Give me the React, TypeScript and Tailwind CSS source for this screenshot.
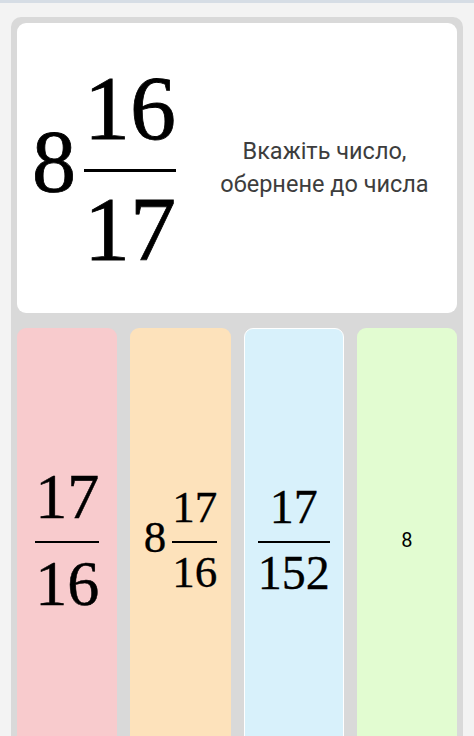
import React from "react";

const serif = { fontFamily: '"Liberation Serif", "Times New Roman", serif' };

export default function App() {
  return (
    <div className="h-[736px] w-[474px] overflow-hidden bg-[#f3f3f3]">
      <div className="h-[3px] bg-[#d6dde5]" />
      <div className="px-[11px] pt-[14px]">
        <div className="rounded-[10px] bg-[#d9d9d9] p-[6px]">
          {/* Question card */}
          <div className="flex h-[290px] items-center rounded-[9px] bg-white pl-[15px]">
            <div className="flex items-center [-webkit-text-stroke:0.8px_black]" style={serif}>
              <div className="mb-[12px] text-[88px] leading-none text-black">8</div>
              <div className="ml-[8px] flex flex-col items-stretch text-black">
                <div className="mb-[15px] text-center text-[92px] leading-none">16</div>
                <div className="h-[3px] bg-black" />
                <div className="mt-[11px] text-center text-[92px] leading-none">17</div>
              </div>
            </div>
            <div
              className="flex-1 pl-[16px] text-center text-[23.5px] leading-[33px] text-[#3d3d3d]"
              style={{ fontFamily: 'Roboto, "Noto Sans", sans-serif' }}
            >
              Вкажіть число,
              <br />
              обернене до числа
            </div>
          </div>

          {/* Answers */}
          <div className="mt-[15px] grid h-[424px] grid-cols-4 gap-[13px]">
            <div
              className="flex items-center justify-center rounded-[9px] bg-[#f8cbcd] [-webkit-text-stroke:0.5px_black]"
              style={serif}
            >
              <div className="flex flex-col items-stretch text-black">
                <div className="mb-[12px] text-center text-[64px] leading-none">17</div>
                <div className="h-[2px] bg-black" />
                <div className="mt-[9px] text-center text-[64px] leading-none">16</div>
              </div>
            </div>
            <div
              className="flex items-center justify-center rounded-[9px] bg-[#fde2bb] [-webkit-text-stroke:0.3px_black]"
              style={serif}
            >
              <div className="flex items-center">
                <div className="mb-[5px] text-[45px] leading-none text-black">8</div>
                <div className="ml-[6px] flex flex-col items-stretch text-black">
                  <div className="mb-[11px] text-center text-[45px] leading-none">17</div>
                  <div className="h-[2px] bg-black" />
                  <div className="mt-[7px] text-center text-[45px] leading-none">16</div>
                </div>
              </div>
            </div>
            <div
              className="flex items-center justify-center rounded-[9px] border-[1.5px] border-white bg-[#d8f1fb] [-webkit-text-stroke:0.3px_black]"
              style={serif}
            >
              <div className="flex flex-col items-stretch text-black">
                <div className="mb-[10px] text-center text-[48px] leading-none">17</div>
                <div className="h-[2px] bg-black" />
                <div className="mt-[6px] text-center text-[48px] leading-none">152</div>
              </div>
            </div>
            <div className="flex items-center justify-center rounded-[9px] bg-[#e2fcd1]">
              <div
                className="text-[20px] leading-none text-black"
                style={{ fontFamily: 'Roboto, "Noto Sans", sans-serif' }}
              >
                8
              </div>
            </div>
          </div>
        </div>
      </div>
    </div>
  );
}
